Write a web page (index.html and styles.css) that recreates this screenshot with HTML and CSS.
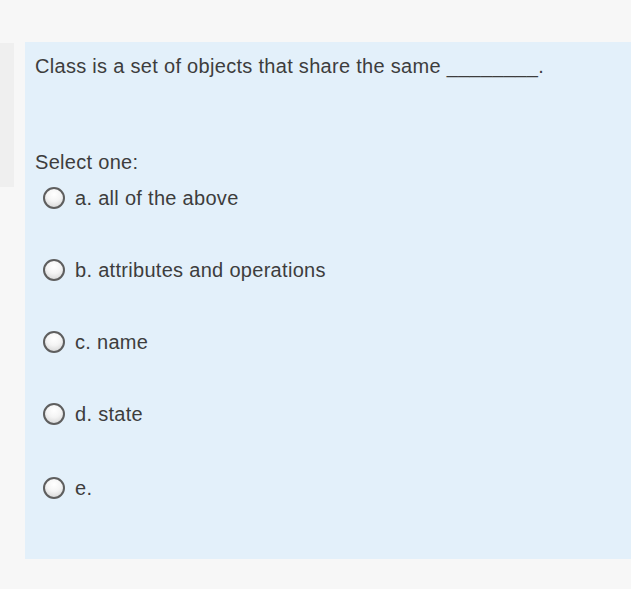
FILE: index.html
```html
<!DOCTYPE html>
<html>
<head>
<meta charset="utf-8">
<link rel="stylesheet" href="styles.css">
</head>
<body>
<div class="page">
  <div class="side"></div>
  <div class="card">
    <p class="question">Class is a set of objects that share the same ________.</p>
    <p class="prompt">Select one:</p>
    <div class="options">
      <label class="option"><span class="radio"></span><span>a. all of the above</span></label>
      <label class="option"><span class="radio"></span><span>b. attributes and operations</span></label>
      <label class="option"><span class="radio"></span><span>c. name</span></label>
      <label class="option"><span class="radio"></span><span>d. state</span></label>
      <label class="option"><span class="radio"></span><span>e.</span></label>
    </div>
  </div>
</div>
</body>
</html>
```
FILE: styles.css
```css
html, body {
  margin: 0;
  padding: 0;
  background: #f7f7f7;
  height: 100%;
}
body {
  font-family: "Liberation Sans", Arial, sans-serif;
  color: #3d3d3d;
}
.page {
  display: flex;
  align-items: flex-start;
  padding-top: 42px;
  gap: 11px;
}
.side {
  width: 14px;
  height: 144px;
  margin-top: 1px;
  background: #efefef;
  flex: none;
}
.card {
  flex: 1;
  height: 517px;
  background: #e3f0fa;
  box-sizing: border-box;
  padding: 12px 0 0 10px;
}
.question, .prompt, .option {
  font-size: 20px;
  line-height: 24px;
  letter-spacing: 0.3px;
}
.question {
  margin: 0;
}
.prompt {
  margin: 72px 0 0 0;
}
.options {
  display: flex;
  flex-direction: column;
  gap: 48px;
  margin-top: 12px;
  padding-left: 8px;
}
.option {
  display: flex;
  align-items: center;
  gap: 10px;
}
.option:last-child { margin-top: 2px; }
.radio {
  width: 18px;
  height: 18px;
  border-radius: 50%;
  border: 2px solid #5e5e5e;
  background: radial-gradient(circle at 50% 30%, #ffffff 0%, #f4f4f4 45%, #cfcfcf 100%);
  flex: none;
}
```
